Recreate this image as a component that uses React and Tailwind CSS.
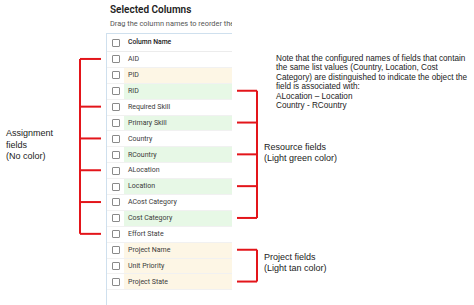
const rows = [
  { name: 'AID', tone: 'none' },
  { name: 'PID', tone: 'tan' },
  { name: 'RID', tone: 'green' },
  { name: 'Required Skill', tone: 'none' },
  { name: 'Primary Skill', tone: 'green' },
  { name: 'Country', tone: 'none' },
  { name: 'RCountry', tone: 'green' },
  { name: 'ALocation', tone: 'none' },
  { name: 'Location', tone: 'green' },
  { name: 'ACost Category', tone: 'none' },
  { name: 'Cost Category', tone: 'green' },
  { name: 'Effort State', tone: 'none' },
  { name: 'Project Name', tone: 'tan' },
  { name: 'Unit Priority', tone: 'tan' },
  { name: 'Project State', tone: 'tan' },
];

const toneBg = {
  none: 'bg-white',
  green: 'bg-[#e7f8e6]',
  tan: 'bg-[#fdf6e5]',
};

// row centres, header 33-51 then 15.9px rows
const rowY = (i) => 51 + 15.9 * i + 7.95;

function Checkbox() {
  return <span className="block h-[8px] w-[8px] rounded-[1px] border border-[#8a8a8a] bg-white" />;
}

function Bracket({ x1, x2, ys, side }) {
  const top = ys[0];
  const bottom = ys[ys.length - 1];
  const spine = side === 'left' ? x1 : x2;
  return (
    <g stroke="#e3151a" strokeWidth="2" fill="none">
      <line x1={spine} y1={top} x2={spine} y2={bottom} />
      {ys.map((y) => (
        <line key={y} x1={x1} y1={y} x2={x2} y2={y} />
      ))}
    </g>
  );
}

export default function App() {
  return (
    <div className="relative flex h-[305px] w-[474px] overflow-hidden bg-white text-[#222]">
      {/* Assignment label */}
      <div className="w-[106px] shrink-0 pl-[6px] pt-[128px] font-['Liberation_Sans',Arial,sans-serif] text-[9px] leading-[11.5px] text-[#222]">
        Assignment
        <br />
        fields
        <br />
        (No color)
      </div>

      {/* Selected columns panel */}
      <div className="w-[126px] shrink-0 overflow-hidden font-['Roboto',sans-serif]">
        <div className="h-[33px] pl-[4px] pt-[3px]">
          <div className="whitespace-nowrap text-[10px] font-semibold leading-[14px] text-[#222]">Selected Columns</div>
          <div className="mt-[2px] whitespace-nowrap text-[7.4px] leading-[10px] text-[#555]">
            Drag the column names to reorder the columns
          </div>
        </div>
        <div className="h-[272px] border-l border-t border-[#cfe0ee]">
          <div className="flex h-[18px] items-center border-b border-[#ececec]">
            <div className="flex w-[17px] justify-center">
              <Checkbox />
            </div>
            <div className="pl-[4px] text-[6.8px] font-medium text-[#222]">Column Name</div>
          </div>
          {rows.map((r) => (
            <div key={r.name} className="flex h-[15.9px] items-center border-b border-[#f1f1f1]">
              <div className="flex w-[17px] justify-center">
                <Checkbox />
              </div>
              <div className={`flex h-full flex-1 items-center pl-[4px] text-[7px] text-[#3a3a3a] ${toneBg[r.tone]}`}>
                {r.name}
              </div>
            </div>
          ))}
        </div>
      </div>

      {/* Notes on the right */}
      <div className="flex flex-1 flex-col font-['Liberation_Sans',Arial,sans-serif] text-[#222]">
        <div className="ml-[44px] mt-[53.5px] text-[8.2px] leading-[9.5px]">
          Note that the configured names of fields that contain
          <br />
          the same list values (Country, Location, Cost
          <br />
          Category) are distinguished to indicate the object the
          <br />
          field is associated with:
          <br />
          ALocation – Location
          <br />
          Country - RCountry
        </div>
        <div className="ml-[32px] mt-[31px] text-[9px] leading-[11px]">
          Resource fields
          <br />
          (Light green color)
        </div>
        <div className="ml-[32px] mt-[88px] text-[9px] leading-[11px]">
          Project fields
          <br />
          (Light tan color)
        </div>
      </div>

      {/* red brackets drawn over the page */}
      <svg className="pointer-events-none absolute inset-0" width="474" height="305" viewBox="0 0 474 305">
        <Bracket x1={80} x2={101} side="left" ys={[0, 3, 5, 7, 9, 11].map(rowY)} />
        <Bracket x1={237} x2={257} side="right" ys={[2, 4, 6, 8, 10].map(rowY)} />
        <Bracket x1={237} x2={257} side="right" ys={[12, 14].map(rowY)} />
      </svg>
    </div>
  );
}
